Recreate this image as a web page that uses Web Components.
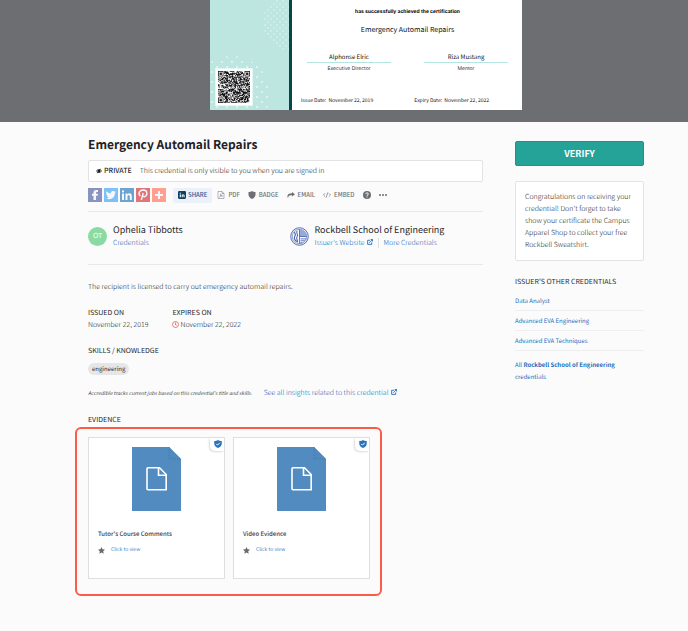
<!DOCTYPE html>
<html lang="en">
<head>
<meta charset="utf-8">
<title>Emergency Automail Repairs</title>
<style>
    body {
        margin: 0;
        background: #fbfbfb;
        color: #1c1e24;
        font: 300 7px/12px "Noto Sans CJK SC", "Noto Sans", sans-serif;
        text-rendering: geometricPrecision;
    }
</style>
</head>
<body>
<credential-page></credential-page>

<script>
    const ICONS = {
        eye: ['0 0 16 16', '<path d="M1 8c3-5 11-5 14 0-3 5-11 5-14 0z" fill="none" stroke="currentColor" stroke-width="2"/><circle cx="8" cy="8" r="4" fill="currentColor"/><path d="M3 14L12 2" stroke="currentColor" stroke-width="2"/>'],
        facebook: ['0 0 14 14', '<path d="M5.500 12V7.800H4V5.800h1.500V4.500C5.500 2.800 6.600 2 8.300 2H10v2H8.800C8.200 4 8 4.300 8 4.800v1h2l-.3 2H8V12z" fill="currentColor"/>'],
        twitter: ['0 0 14 14', '<path d="M12 3.900l-1.100.3.800-1.100-1.300.5a2.100 2.100 0 0 0-3.600 1.900C5 5.400 3.500 4.500 2.500 3.300c-.6 1-.3 2.200.6 2.800l-.9-.3c0 1 .7 1.900 1.700 2.100h-1c.3.900 1.100 1.500 2 1.500A4.300 4.300 0 0 1 2 10.300c4 2.200 9-.1 8.900-5.300z" fill="currentColor"/>'],
        linkedin: ['0 0 14 14', '<path d="M2 5.500h2V12H2zM3 2.300a1.100 1.100 0 1 1 0 2.300 1.100 1.100 0 0 1 0-2.300zM5.500 5.500h2v.9c.9-1.600 4.300-1.500 4.300 1.500V12h-2V8.500c0-1.800-2.300-1.700-2.300 0V12h-2z" fill="currentColor"/>'],
        pinterest: ['0 0 14 14', '<path d="M4.300 8C1.500 5.500 3.800 2 7.100 2c5.200 0 4.600 6.700 1 6.700-.8 0-1.200-.3-1.500-.8M7.200 5L5.300 12" fill="none" stroke="currentColor" stroke-width="1.400"/>'],
        plus: ['0 0 14 14', '<path d="M7 3v8M3 7h8" stroke="currentColor" stroke-width="2"/>'],
        linkedinBox: ['0 0 14 14', '<rect width="14" height="14" rx="2" fill="#10405f"/><path d="M3 6h2v5H3zM3 3h2v2H3zM6.500 6h1.700v.7C9 5.500 11.500 5.600 11.500 8v3H9.700V8.300c0-1.200-1.500-1.100-1.500 0V11H6.500z" fill="#fff"/>'],
        pdf: ['0 0 14 16', '<path d="M1 1h8l4 4v10H1zM9 1v4h4M4 12c2-1 3.500-5 2.500-6s-1 4 4 4.300C9 9 5 10.500 4 12z" fill="none" stroke="currentColor"/>'],
        shield: ['0 0 14 16', '<path d="M7 0c2 1.500 4.500 2 7 2v5c0 4-3 7.500-7 9-4-1.500-7-5-7-9V2c2.500 0 5-.5 7-2z" fill="currentColor"/>'],
        share: ['0 0 16 14', '<path d="M10 1l6 4.500-6 4.500V7.500C5 7 3 8 2 13c-3-5 0-9.500 8-9.500z" fill="currentColor"/>'],
        code: ['0 0 18 14', '<path d="M5 3L1 7l4 4M13 3l4 4-4 4M11 1L7 13" fill="none" stroke="currentColor" stroke-width="1.500"/>'],
        help: ['0 0 16 16', '<circle cx="8" cy="8" r="8" fill="currentColor"/><path d="M5.500 6.300C5.500 3 10.700 3 10.700 6 10.700 7.800 8 7.800 8 9.800M8 11v2" fill="none" stroke="#fff" stroke-width="2"/>'],
        more: ['0 0 16 16', '<path d="M0 6.500h4v3H0zM6 6.500h4v3H6zM12 6.500h4v3h-4z" fill="currentColor"/>'],
        external: ['0 0 14 14', '<path d="M7 3H1.500v9.500H11V8M8.500 1.300H13v4.500M13 1.300L5.500 8.800" fill="none" stroke="currentColor" stroke-width="2"/>'],
        clock: ['0 0 14 14', '<circle cx="7" cy="7" r="6" fill="none" stroke="currentColor" stroke-width="1.500"/><path d="M7 3v4.500l2.500 1" fill="none" stroke="currentColor" stroke-width="1.500"/>'],
        star: ['0 0 16 16', '<path d="M8 0l2.400 5.200 5.600.7-4.100 3.900 1 5.700L8 12.700l-4.900 2.800 1-5.700L0 5.900l5.600-.7z" fill="currentColor"/>'],
        verified: ['0 0 16 16', '<path d="M8 0c2 1.500 4.500 2 7.500 2v5c0 4.500-3 7.500-7.500 9C3.500 14.500.5 11.500.5 7V2C3.500 2 6 1.500 8 0z" fill="#2774bd"/><path d="M4.500 7.800L7 10.300l4.500-4.800" fill="none" stroke="#fff" stroke-width="2"/>'],
        file: ['0 0 49 64', '<path d="M0 0h37l12 12v52H0z" fill="#518bbf"/><path d="M37 0v12h12z" fill="#4f89bd"/><path d="M37 0v12h12" fill="none" stroke="#3f74a6" stroke-width=".7" stroke-dasharray="1 1"/><path d="M16 20.800h11.500l6.700 6.700v15.200H16a1 1 0 0 1-1-1V21.800a1 1 0 0 1 1-1zM26.500 21v7.300h7.500" fill="none" stroke="#fff" stroke-width="1.600"/>'],
        school: ['0 0 40 40', '<circle cx="20" cy="20" r="18.500" fill="#dfe4f3" stroke="#5972b8" stroke-width="2"/><circle cx="20" cy="20" r="15" fill="#fff" stroke="#6d83c0" stroke-width="1.500"/><path d="M20 5a15 15 0 0 1 15 15H20z" fill="#9aa8d4"/><path d="M20 5v30M20 20h15M22 25h12M22 29h9M22 33h4" stroke="#4562b2" stroke-width="1.800"/><path d="M9 11c3 3 3 6 1 9s0 7 4 11M15 8c-3 5 3 8 0 12s1 7 1 12" fill="none" stroke="#465fae" stroke-width="2.200"/>']
    };

    class UiIcon extends HTMLElement {
        connectedCallback() {
            const [box, shapes] = ICONS[this.getAttribute('name')];
            this.attachShadow({ mode: 'open' });
            this.shadowRoot.innerHTML = `
                <style>
                    :host { display: inline-block; flex: none; width: 8px; height: 8px; }
                    svg { display: block; width: 100%; height: 100%; }
                </style>
                <svg viewBox="${box}" aria-hidden="true">${shapes}</svg>`;
        }
    }
    customElements.define('ui-icon', UiIcon);

    // QR style block: three finder squares, the rest filled from a small generator
    class QrCode extends HTMLElement {
        constructor() {
            super();
            this.attachShadow({ mode: 'open' });
            const n = 41;
            let seed = 77;
            let d = '';
            for (let y = 0; y < n; y++) {
                for (let x = 0; x < n; x++) {
                    seed = (seed * 1103515245 + 12345) % 2147483648;
                    const corner = (x < 8 || x > n - 9) && y < 8 || x < 8 && y > n - 9;
                    if (!corner && seed / 2147483648 < 0.58) d += `M${x} ${y}h1v1h-1z`;
                }
            }
            const finder = (x, y) => `<path d="M${x} ${y}h7v7h-7z" /><path d="M${x + 1} ${y + 1}h5v5h-5z" fill="#fff"/><path d="M${x + 2} ${y + 2}h3v3h-3z"/>`;
            this.shadowRoot.innerHTML = `
                <style>
                    :host { display: block; width: 32px; height: 32px; padding: 2px; background: #fff; border: 1px solid #e4f5f3; }
                    svg { display: block; width: 100%; height: 100%; }
                </style>
                <svg viewBox="0 0 ${n} ${n}" fill="#151518"><path d="${d}"/>${finder(0, 0)}${finder(n - 7, 0)}${finder(0, n - 7)}</svg>`;
        }
    }
    customElements.define('qr-code', QrCode);

    class CertificatePreview extends HTMLElement {
        constructor() {
            super();
            this.attachShadow({ mode: 'open' });
            this.shadowRoot.innerHTML = `
                <style>
                    :host { display: flex; justify-content: center; background: #6d6e72; padding: 0 0 12px 44px; }
                    .paper { display: grid; grid-template-columns: 79px 3px 1fr; width: 312px; background: #fff; color: #111; font-weight: 400; }
                    .side { display: grid; align-items: end; background: #bce6df; }
                    .side > * { grid-area: 1 / 1; }
                    .dots { width: 79px; height: 110px; }
                    qr-code { margin: 0 0 4px 5px; z-index: 1; }
                    .bar { background: #04484c; }
                    .text { padding: 6px 14px 3px 15px; }
                    .lead { margin: 0; font: bold 5px/12px Inter, "Noto Sans", sans-serif; color: #000; text-align: center; }
                    h2 { margin: 6px 0 15px; font-size: 7px; line-height: 12px; font-weight: 400; text-align: center; }
                    .row { display: flex; justify-content: space-between; }
                    .sign { width: 84px; text-align: center; font-size: 6px; line-height: 11px; }
                    .sign b { display: block; font-weight: 400; border-bottom: 1px solid #b5e5e1; }
                    .sign span { font: 5px/12px Inter, "Noto Sans", sans-serif; color: #333; display: block; }
                    .dates { margin: 20px 19px 0 -6px; font-size: 5px; line-height: 12px; }
                    .dates span { white-space: pre; }
                </style>
                <section class="paper">
                    <div class="side">
                        <svg class="dots" viewBox="0 0 79 110">
                            <defs>
                                <pattern id="fine" width="6" height="6" patternUnits="userSpaceOnUse"><circle cx="1" cy="1" r=".7" fill="#eefaf8"/><circle cx="4" cy="4" r=".7" fill="#eefaf8"/></pattern>
                                <pattern id="wide" width="10" height="10" patternUnits="userSpaceOnUse"><circle cx="2" cy="2" r=".9" fill="#eefaf8"/><circle cx="7" cy="7" r=".9" fill="#eefaf8"/></pattern>
                            </defs>
                            <circle cx="82" cy="22" r="29" fill="url(#fine)"/>
                            <circle cx="22" cy="94" r="38" fill="url(#wide)"/>
                        </svg>
                        <qr-code></qr-code>
                    </div>
                    <div class="bar"></div>
                    <div class="text">
                        <p class="lead">has successfully achieved the certification</p>
                        <h2>Emergency Automail Repairs</h2>
                        <div class="row">
                            <div class="sign"><b>Alphonse Elric</b><span>Executive Director</span></div>
                            <div class="sign"><b>Riza Mustang</b><span>Mentor</span></div>
                        </div>
                        <div class="row dates"><span>Issue Date:  November 22, 2019</span><span>Expiry Date:  November 22, 2022</span></div>
                    </div>
                </section>`;
        }
    }
    customElements.define('certificate-preview', CertificatePreview);

    class ShareBar extends HTMLElement {
        constructor() {
            super();
            this.attachShadow({ mode: 'open' });
            this.shadowRoot.innerHTML = `
                <style>
                    :host { display: flex; align-items: center; height: 16px; }
                    button { display: flex; align-items: center; gap: 3px; margin: 0; padding: 0; border: 0; background: none; color: #6e6f74; font: inherit; font-size: 6px; font-weight: 500; line-height: 12px; white-space: nowrap; }
                    .social { display: flex; gap: 2px; margin-right: 7px; }
                    .social button { width: 14px; height: 14px; color: #f5f7fb; }
                    .social ui-icon { width: 14px; height: 14px; }
                    .fb { background: #8993be; }
                    .tw { background: #7fc1f6; }
                    .in { background: #6ba4d0; }
                    .pin { background: #df7579; }
                    .add { background: #ff9f90; }
                    .actions { display: flex; align-items: center; gap: 8px; }
                    .actions .share { gap: 2px; height: 15px; padding: 0 5px; margin-right: -3px; border-radius: 2px; background: #eaf1f9; color: #27569a; }
                </style>
                <div class="social">
                    <button class="fb" aria-label="Facebook"><ui-icon name="facebook"></ui-icon></button>
                    <button class="tw" aria-label="Twitter"><ui-icon name="twitter"></ui-icon></button>
                    <button class="in" aria-label="LinkedIn"><ui-icon name="linkedin"></ui-icon></button>
                    <button class="pin" aria-label="Pinterest"><ui-icon name="pinterest"></ui-icon></button>
                    <button class="add" aria-label="More networks"><ui-icon name="plus"></ui-icon></button>
                </div>
                <div class="actions">
                    <button class="share"><ui-icon name="linkedinBox"></ui-icon>SHARE</button>
                    <button><ui-icon name="pdf"></ui-icon>PDF</button>
                    <button><ui-icon name="shield"></ui-icon>BADGE</button>
                    <button><ui-icon name="share"></ui-icon>EMAIL</button>
                    <button><ui-icon name="code"></ui-icon>EMBED</button>
                    <button aria-label="Help"><ui-icon name="help"></ui-icon></button>
                    <button aria-label="More"><ui-icon name="more"></ui-icon></button>
                </div>`;
        }
    }
    customElements.define('share-bar', ShareBar);

    class PartyCard extends HTMLElement {
        constructor() {
            super();
            this.attachShadow({ mode: 'open' });
            this.shadowRoot.innerHTML = `
                <style>
                    :host { display: flex; align-items: center; gap: 6px; white-space: nowrap; }
                    h2 { margin: 0; font-size: 9px; line-height: 14px; font-weight: 400; color: #26282e; }
                    p { margin: 0; font-size: 7px; line-height: 12px; }
                </style>
                <slot name="avatar"></slot>
                <div><h2><slot name="name"></slot></h2><p><slot></slot></p></div>`;
        }
    }
    customElements.define('party-card', PartyCard);

    class EvidenceCard extends HTMLElement {
        constructor() {
            super();
            this.attachShadow({ mode: 'open' });
            this.shadowRoot.innerHTML = `
                <style>
                    :host { display: block; position: relative; box-sizing: border-box; min-height: 142px; padding: 9px; border: 1px solid #dedfe1; background: #fff; }
                    .thumb { display: block; width: 49px; height: 64px; margin: 0 auto 17px; }
                    .mark { position: absolute; top: 0; right: 0; padding: 2px 2px 3px 4px; border-radius: 0 0 0 5px; box-shadow: -1px 1px 2px #d8dbdf; }
                    .mark ui-icon { display: block; }
                    h3 { margin: 0 0 4px; font-size: 6px; line-height: 12px; font-weight: 500; color: #3e4046; }
                    p { display: flex; align-items: center; gap: 6px; margin: 0; color: #696a70; }
                    p ui-icon { width: 7px; height: 7px; }
                    a { color: #3f86c8; font-size: 5px; line-height: 12px; font-weight: 400; text-decoration: none; }
                </style>
                <span class="mark"><ui-icon name="verified"></ui-icon></span>
                <ui-icon class="thumb" name="file"></ui-icon>
                <h3><slot></slot></h3>
                <p><ui-icon name="star"></ui-icon><a href="#">Click to view</a></p>`;
        }
    }
    customElements.define('evidence-card', EvidenceCard);

    class IssuerSidebar extends HTMLElement {
        constructor() {
            super();
            this.attachShadow({ mode: 'open' });
            this.shadowRoot.innerHTML = `
                <style>
                    :host { display: block; padding-top: 19px; }
                    button { display: block; width: 100%; height: 25px; padding: 0; border: 1px solid #209287; border-radius: 2px; background: #26a399; color: #fff; font: inherit; font-size: 9px; font-weight: 700; }
                    .note { margin: 15px 0; padding: 9px; border: 1px solid #e2e3e5; border-radius: 2px; background: #fff; }
                    h3 { margin: 0 0 3px; font-size: 7px; line-height: 12px; font-weight: 400; color: #2b2d33; white-space: nowrap; }
                    ul { margin: 0; padding: 0; list-style: none; font-weight: 400; }
                    li { padding: 4px 0 3px; border-bottom: 1px solid #eeeff0; font-size: 6px; }
                    a { color: #1b6fbe; text-decoration: none; }
                    .all { display: block; margin-top: 8px; font-size: 6px; line-height: 12px; font-weight: 400; }
                </style>
                <button>VERIFY</button>
                <div class="note">Congratulations on receiving your credential! Don't forget to take show your certificate the Campus Apparel Shop to collect your free Rockbell Sweatshirt.</div>
                <h3>ISSUER'S OTHER CREDENTIALS</h3>
                <ul>
                    <li><a href="#">Data Analyst</a></li>
                    <li><a href="#">Advanced EVA Engineering</a></li>
                    <li><a href="#">Advanced EVA Techniques</a></li>
                </ul>
                <a class="all" href="#">All <b>Rockbell School of Engineering</b> credentials</a>`;
        }
    }
    customElements.define('issuer-sidebar', IssuerSidebar);

    class CredentialPage extends HTMLElement {
        constructor() {
            super();
            this.attachShadow({ mode: 'open' });
            this.shadowRoot.innerHTML = `
                <style>
                    :host { display: block; }
                    .page { display: grid; grid-template-columns: minmax(0, 1fr) 129px; gap: 32px; padding: 0 44px 36px 88px; }
                    main { padding-top: 13px; }
                    h1 { margin: 0 0 5px; font-size: 12px; line-height: 20px; font-weight: 700; color: #1f2127; }
                    .private { display: flex; align-items: center; height: 20px; margin-bottom: 5px; padding: 0 7px; border: 1px solid #e2e3e5; border-radius: 2px; background: #fff; }
                    .private ui-icon { width: 6px; height: 6px; margin-right: 2px; }
                    .private b { margin-right: 8px; font-weight: 500; color: #2b2d33; }
                    .parties { display: grid; grid-template-columns: 1fr 1fr; margin: 8px 0 16px; padding: 11px 0 15px; border: 1px solid #e8e8ea; border-width: 1px 0; }
                    .parties party-card + party-card { margin-left: 4px; }
                    .avatar { width: 19px; height: 19px; border-radius: 50%; background: #8adba3; color: #fff; font-weight: 400; text-align: center; line-height: 19px; }
                    .seal { width: 19px; height: 19px; }
                    a { color: #1068bd; text-decoration: none; }
                    a ui-icon { width: 6px; height: 6px; margin-left: 2px; }
                    .more { margin-left: 5px; padding-left: 5px; border-left: 1px solid #dcdde0; }
                    p { margin: 0; }
                    h4 { margin: 0; font-size: 7px; line-height: 12px; font-weight: 400; color: #24262c; }
                    .dates { display: flex; gap: 24px; margin: 14px 0; }
                    .expiry { color: #e55750; width: 7px; height: 7px; vertical-align: -1px; margin-right: 1px; }
                    .chip { display: inline-block; margin: 6px 0; padding: 0 4px; border-radius: 6px; background: #e6e6e8; color: #2d2f35; font-size: 6px; line-height: 12px; font-weight: 400; vertical-align: top; }
                    .jobs { margin: 6px 0 14px; }
                    .jobs i { margin-right: 10px; font-size: 5px; font-weight: 400; color: #44464c; }
                    .evidence { display: grid; grid-template-columns: 137px 137px; gap: 8px; width: max-content; margin: 1px 0 0 -13px; padding: 8px 10px 15px 11px; border: 2px solid #ff5a46; border-radius: 6px; }
                </style>
                <certificate-preview></certificate-preview>
                <div class="page">
                    <main>
                        <h1>Emergency Automail Repairs</h1>
                        <div class="private"><ui-icon name="eye"></ui-icon><b>PRIVATE</b><span>This credential is only visible to you when you are signed in</span></div>
                        <share-bar></share-bar>
                        <div class="parties">
                            <party-card><div slot="avatar" class="avatar">OT</div><span slot="name">Ophelia Tibbotts</span><a href="#">Credentials</a></party-card>
                            <party-card><ui-icon slot="avatar" class="seal" name="school"></ui-icon><span slot="name">Rockbell School of Engineering</span><a href="#">Issuer's Website<ui-icon name="external"></ui-icon></a><a class="more" href="#">More Credentials</a></party-card>
                        </div>
                        <p>The recipient is licensed to carry out emergency automail repairs.</p>
                        <div class="dates">
                            <div><h4>ISSUED ON</h4><p>November 22, 2019</p></div>
                            <div><h4>EXPIRES ON</h4><p><ui-icon class="expiry" name="clock"></ui-icon>November 22, 2022</p></div>
                        </div>
                        <h4>SKILLS / KNOWLEDGE</h4>
                        <span class="chip">engineering</span>
                        <p class="jobs"><i>Accredible tracks current jobs based on this credential's title and skills.</i> <a href="#">See all insights related to this credential<ui-icon name="external"></ui-icon></a></p>
                        <h4>EVIDENCE</h4>
                        <section class="evidence">
                            <evidence-card>Tutor's Course Comments</evidence-card>
                            <evidence-card>Video Evidence</evidence-card>
                        </section>
                    </main>
                    <issuer-sidebar></issuer-sidebar>
                </div>`;
        }
    }
    customElements.define('credential-page', CredentialPage);
</script>
</body>
</html>
